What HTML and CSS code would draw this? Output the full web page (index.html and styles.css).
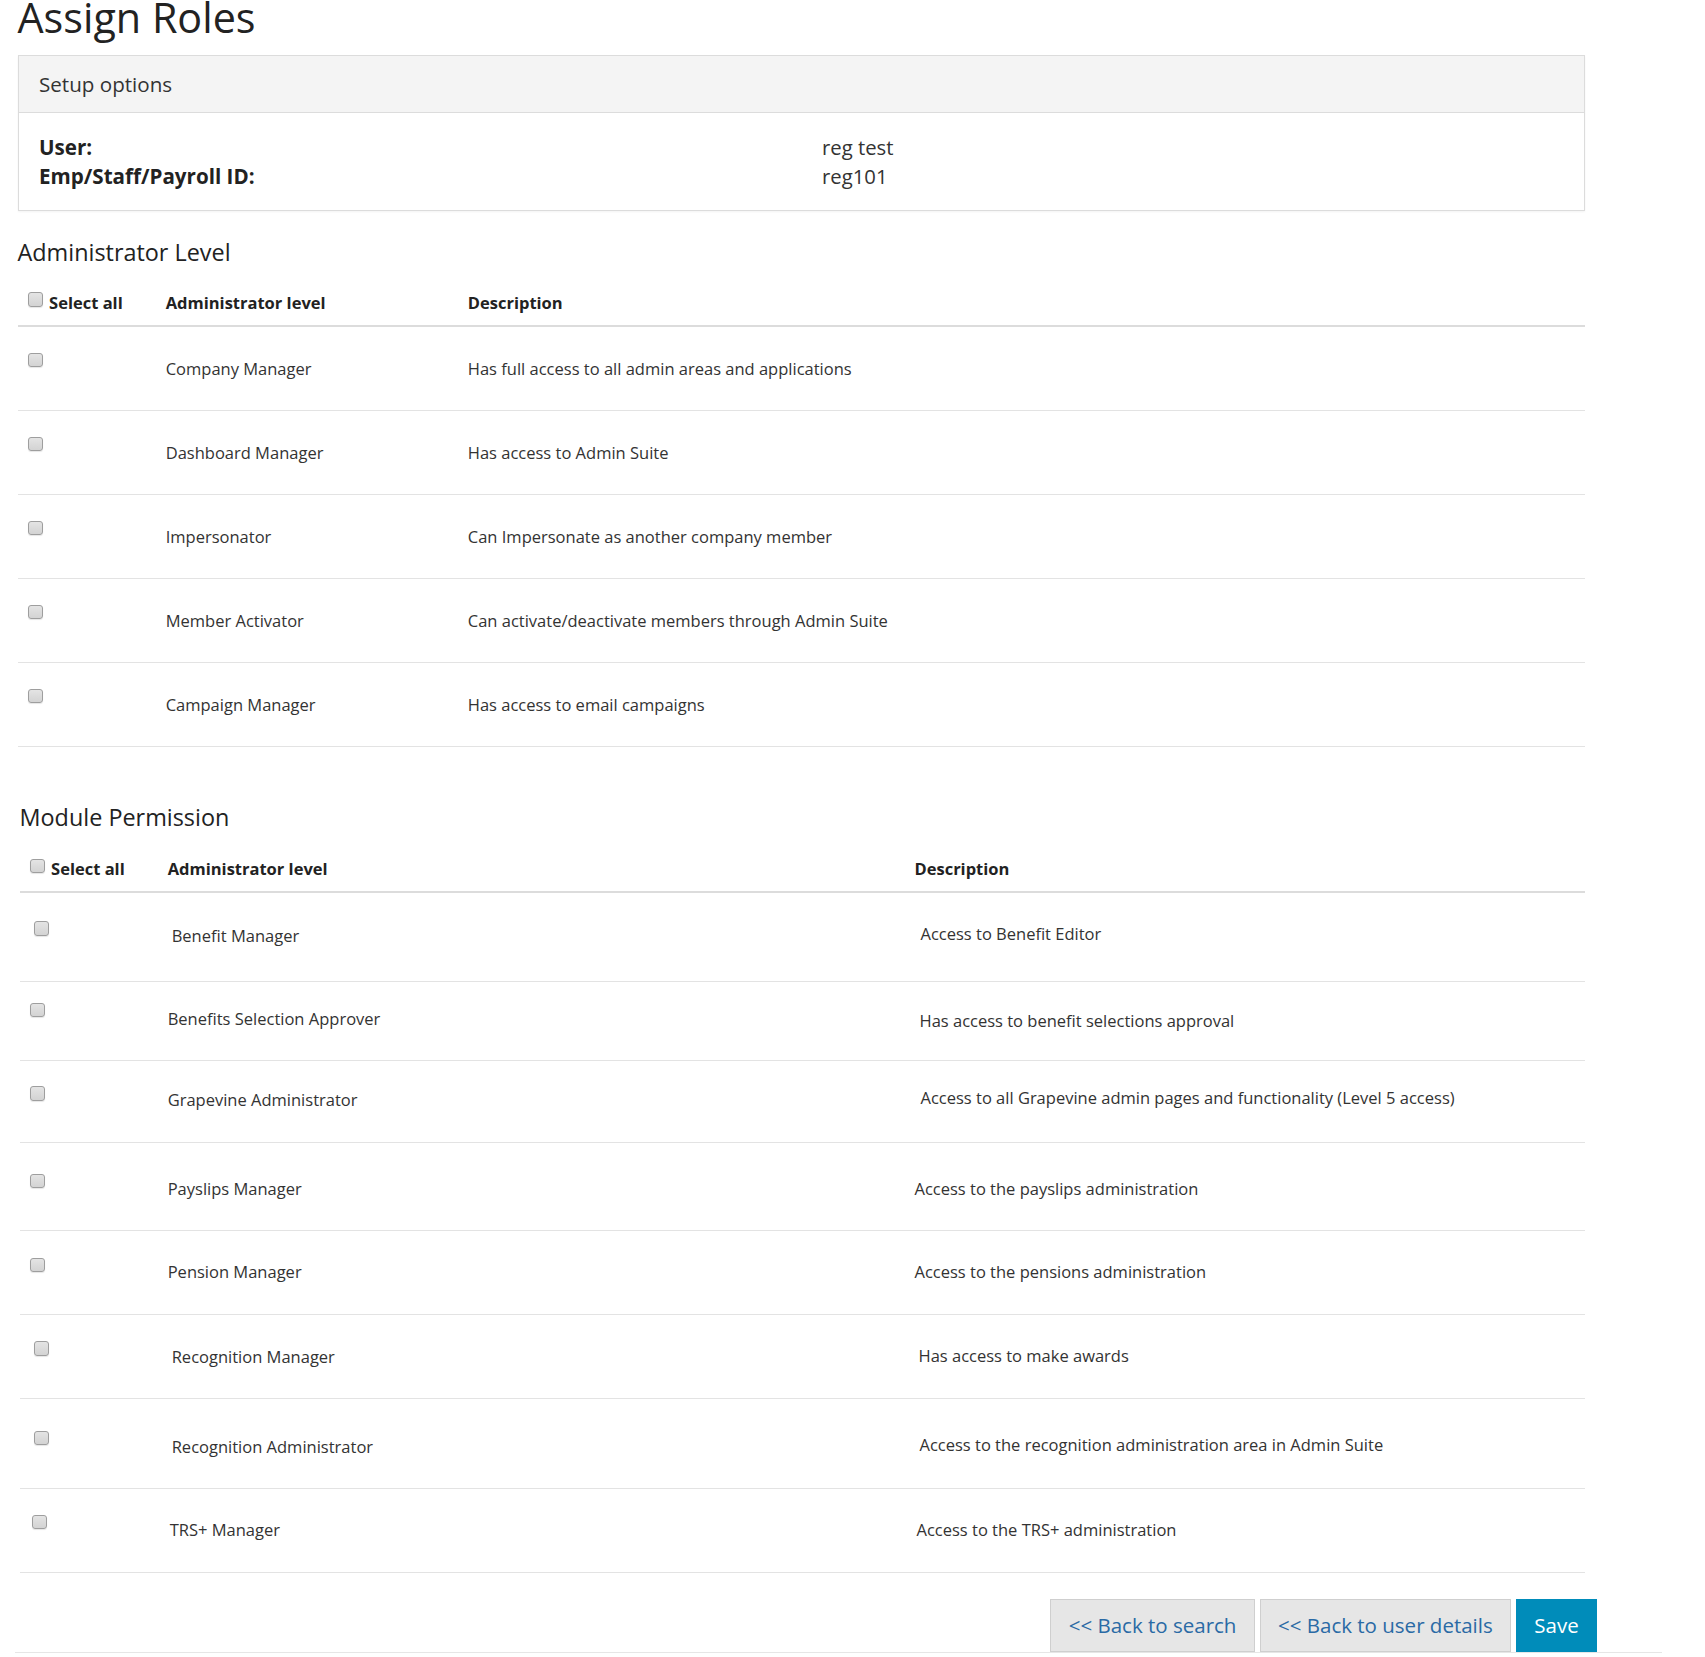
FILE: index.html
```html
<!DOCTYPE html>
<html lang="en">
<head>
<meta charset="utf-8">
<title>Assign Roles</title>
<link rel="stylesheet" href="styles.css">
</head>
<body>
<div class="page">
  <h1 class="title">Assign Roles</h1>

  <div class="panel">
    <div class="panel-head">Setup options</div>
    <div class="panel-body">
      <div class="info-row"><span class="info-label">User:</span><span class="info-value">reg test</span></div>
      <div class="info-row"><span class="info-label">Emp/Staff/Payroll ID:</span><span class="info-value">reg101</span></div>
    </div>
  </div>

  <section class="roles roles--admin">
    <h2 class="section-title">Administrator Level</h2>
    <div class="grid-head">
      <label class="select-all"><input type="checkbox" class="cb"><span>Select all</span></label>
      <div class="col-name">Administrator level</div>
      <div class="col-desc">Description</div>
    </div>
    <div class="row"><div class="cell-cb"><input type="checkbox" class="cb"></div><div class="cell-name">Company Manager</div><div class="cell-desc">Has full access to all admin areas and applications</div></div>
    <div class="row"><div class="cell-cb"><input type="checkbox" class="cb"></div><div class="cell-name">Dashboard Manager</div><div class="cell-desc">Has access to Admin Suite</div></div>
    <div class="row"><div class="cell-cb"><input type="checkbox" class="cb"></div><div class="cell-name">Impersonator</div><div class="cell-desc">Can Impersonate as another company member</div></div>
    <div class="row"><div class="cell-cb"><input type="checkbox" class="cb"></div><div class="cell-name">Member Activator</div><div class="cell-desc">Can activate/deactivate members through Admin Suite</div></div>
    <div class="row"><div class="cell-cb"><input type="checkbox" class="cb"></div><div class="cell-name">Campaign Manager</div><div class="cell-desc">Has access to email campaigns</div></div>
  </section>

  <section class="roles roles--module">
    <h2 class="section-title">Module Permission</h2>
    <div class="grid-head">
      <label class="select-all"><input type="checkbox" class="cb"><span>Select all</span></label>
      <div class="col-name">Administrator level</div>
      <div class="col-desc">Description</div>
    </div>
    <div class="row m1"><div class="cell-cb"><input type="checkbox" class="cb"></div><div class="cell-name">Benefit Manager</div><div class="cell-desc">Access to Benefit Editor</div></div>
    <div class="row m2"><div class="cell-cb"><input type="checkbox" class="cb"></div><div class="cell-name">Benefits Selection Approver</div><div class="cell-desc">Has access to benefit selections approval</div></div>
    <div class="row m3"><div class="cell-cb"><input type="checkbox" class="cb"></div><div class="cell-name">Grapevine Administrator</div><div class="cell-desc">Access to all Grapevine admin pages and functionality (Level 5 access)</div></div>
    <div class="row m4"><div class="cell-cb"><input type="checkbox" class="cb"></div><div class="cell-name">Payslips Manager</div><div class="cell-desc">Access to the payslips administration</div></div>
    <div class="row m5"><div class="cell-cb"><input type="checkbox" class="cb"></div><div class="cell-name">Pension Manager</div><div class="cell-desc">Access to the pensions administration</div></div>
    <div class="row m6"><div class="cell-cb"><input type="checkbox" class="cb"></div><div class="cell-name">Recognition Manager</div><div class="cell-desc">Has access to make awards</div></div>
    <div class="row m7"><div class="cell-cb"><input type="checkbox" class="cb"></div><div class="cell-name">Recognition Administrator</div><div class="cell-desc">Access to the recognition administration area in Admin Suite</div></div>
    <div class="row m8"><div class="cell-cb"><input type="checkbox" class="cb"></div><div class="cell-name">TRS+ Manager</div><div class="cell-desc">Access to the TRS+ administration</div></div>
  </section>

  <div class="actions">
    <a class="btn" href="#">&lt;&lt; Back to search</a>
    <a class="btn" href="#">&lt;&lt; Back to user details</a>
    <a class="btn btn--primary" href="#">Save</a>
  </div>
</div>
</body>
</html>
```
FILE: styles.css
```css
html, body {
  margin: 0;
  background: #fff;
}

body {
  font-family: "Open Sans", "Liberation Sans", Arial, sans-serif;
  color: #333;
}

.page {
  padding-left: 17.5px;
  width: 1567.5px;
}

.title {
  font-size: 41.3px;
  font-weight: 400;
  line-height: 44px;
  margin: -4.6px 0 15.9px;
  color: #222;
}

/* Setup panel */
.panel {
  border: 1px solid #dcdcdc;
  box-shadow: 0 1px 2px rgba(0, 0, 0, 0.05);
}

.panel-head {
  background: #f4f4f4;
  border-bottom: 1px solid #dcdcdc;
  padding: 14px 20.5px;
  font-size: 20.6px;
  line-height: 28px;
  color: #333;
}

.panel-body {
  padding: 20px 20.5px;
  font-size: 20.3px;
  line-height: 28.3px;
}

.info-row {
  display: grid;
  grid-template-columns: 783px 1fr;
}

.info-label {
  font-size: 20.6px;
  font-weight: 700;
  color: #222;
}

.info-value {
  color: #333;
}

/* Sections */
.section-title {
  font-size: 23.4px;
  font-weight: 400;
  line-height: 25.4px;
  margin: 29px 0 0;
  color: #222;
}

.roles--module {
  margin-left: 2px;
}

.roles--module .section-title {
  margin-top: 58.6px;
}

.grid-head,
.row {
  display: grid;
  font-size: 16.5px;
  line-height: 23.1px;
}

.roles--admin .grid-head,
.roles--admin .row {
  grid-template-columns: 148.2px 302.1px 1fr;
}

.roles--module .grid-head,
.roles--module .row {
  grid-template-columns: 148.2px 746.8px 1fr;
}

.grid-head {
  padding: 25.6px 0 10.6px;
  border-bottom: 2px solid #dcdcdc;
  font-weight: 700;
  color: #222;
}

.roles--module .grid-head {
  padding: 26px 0 10.9px;
}

.select-all {
  display: flex;
  align-items: flex-start;
  gap: 6.5px;
  padding-left: 10.8px;
}

.select-all .cb {
  margin-top: 1.4px;
}

.roles--module .select-all .cb {
  margin-top: 2.3px;
}

.row {
  height: var(--h, 83px);
  border-bottom: 1px solid #e3e3e3;
  color: #333;
}

.cell-cb {
  padding-top: var(--cb, 26px);
  padding-left: calc(10.8px + var(--dx, 0px));
}

.cell-name {
  padding-top: var(--t, 30.75px);
  padding-left: var(--dx, 0px);
}

.cell-desc {
  padding-top: calc(var(--t, 30.75px) + var(--dd, 0px));
  padding-left: var(--ddx, 0px);
}

.m1 { --h: 88.7px; --cb: 28.7px; --t: 31.75px; --dx: 4px; --ddx: 6px; --dd: -2px; }
.m2 { --h: 77.3px; --cb: 20.6px; --t: 24.65px; --ddx: 5px; --dd: 2px; }
.m3 { --h: 81.3px; --cb: 25.7px; --t: 27.75px; --ddx: 6px; --dd: -2px; }
.m4 { --h: 87.4px; --cb: 31px; --t: 33.75px; }
.m5 { --h: 82.6px; --cb: 26.6px; --t: 28.65px; }
.m6 { --h: 83px; --cb: 26.4px; --t: 29.75px; --dx: 4px; --ddx: 4px; --dd: -1px; }
.m7 { --h: 89px; --cb: 31.7px; --t: 36px; --dx: 4px; --ddx: 5px; --dd: -2px; }
.m8 { --h: 83px; --cb: 25.7px; --t: 29.5px; --dx: 2px; --ddx: 2px; }

/* Checkbox */
.cb {
  -webkit-appearance: none;
  appearance: none;
  display: block;
  box-sizing: border-box;
  width: 14.3px;
  height: 14.3px;
  margin: 0;
  border: 1px solid #9e9e9e;
  border-radius: 3px;
  background: linear-gradient(#e4e4e4, #d3d3d3);
  box-shadow: 0 1px 1px rgba(0, 0, 0, 0.1);
}

/* Actions */
.actions {
  display: flex;
  justify-content: flex-end;
  gap: 5px;
  box-sizing: border-box;
  width: 1647px;
  margin: 25.7px 0 0 -2.5px;
  padding-right: 65px;
  border-bottom: 1px solid #e6e6e6;
}

.btn {
  display: flex;
  align-items: center;
  box-sizing: border-box;
  height: 53px;
  padding: 0 17.3px;
  font-size: 20.5px;
  border: 1px solid #cfcfcf;
  background: #e6e6e6;
  color: #2a6aa5;
  text-decoration: none;
}

.btn--primary {
  background: #008cba;
  border-color: #008cba;
  color: #fff;
}
```
